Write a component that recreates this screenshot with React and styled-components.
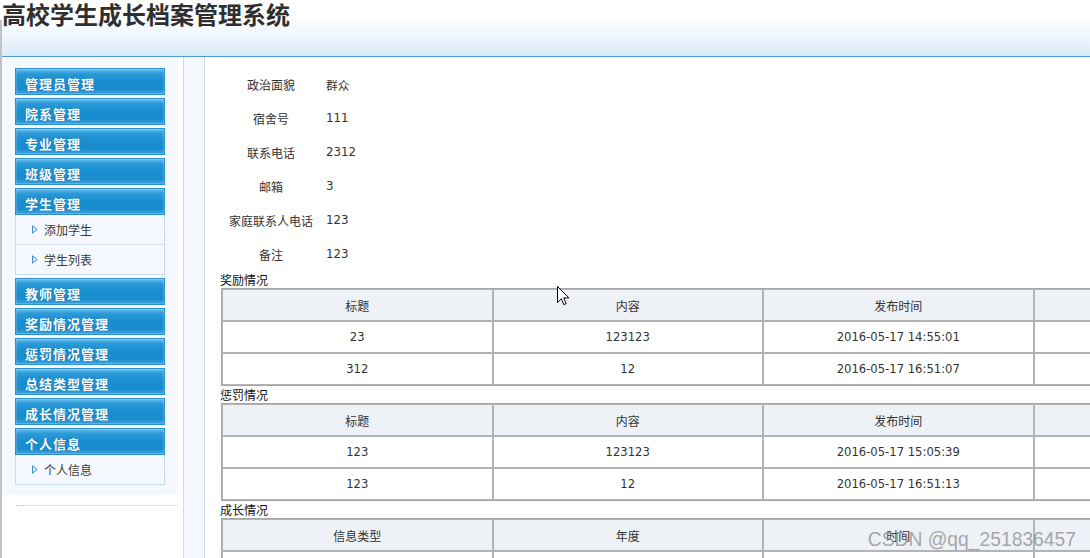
import React from "react";
import styled, { createGlobalStyle } from "styled-components";

const GlobalStyle = createGlobalStyle`
  html, body {
    margin: 0;
    padding: 0;
    background: #ffffff;
    overflow: hidden;
  }
  body {
    font-family: "DejaVu Sans", "Noto Sans CJK SC", sans-serif;
    font-size: 12px;
    color: #333;
  }
  * { box-sizing: border-box; }
`;

const Page = styled.div`
  position: relative;
  width: 1090px;
  height: 558px;
  overflow: hidden;
`;

const Header = styled.header`
  position: relative;
  height: 57px;
  padding-top: 1px;
  background: linear-gradient(#ffffff 0px, #ffffff 20px, #fbfdff 20px, #eef6fd 36px, #dbebf9 56px);
  border-bottom: 1px solid #4b9bd8;
  &::before {
    content: "";
    position: absolute;
    left: 0;
    top: 20px;
    bottom: -1px;
    width: 2px;
    background: #c2c2c2;
  }
`;

const Title = styled.h1`
  margin: 0;
  padding-left: 2px;
  font-family: "Noto Sans CJK SC", sans-serif;
  font-weight: 700;
  font-size: 24px;
  line-height: 26px;
  color: #2f2f2f;
  white-space: nowrap;
`;

const Body = styled.div`
  display: flex;
  height: 501px;
  border-left: 2px solid #c2c2c2;
`;

const Sidebar = styled.div`
  flex: 0 0 176px;
  display: flex;
  flex-direction: column;
`;

const MenuPanel = styled.div`
  height: 438px;
  background: #f5f9ff;
  padding: 11px 0 0 13px;
`;

const DottedLine = styled.div`
  margin: 10px 0 0 14px;
  border-top: 1px dotted #a9cbe6;
`;

const Group = styled.div`
  width: 150px;
  margin-bottom: 3px;
`;

const GroupHeader = styled.div`
  height: 27px;
  border: 1px solid #2e8fcd;
  background: linear-gradient(#6cbfea 0%, #2b9ad8 18%, #1a8fd0 45%, #198ccd 80%, #3fa4de 100%);
  box-shadow: inset 0 0 0 1px rgba(255, 255, 255, 0.18);
  padding: 6px 0 0 9px;
  font-family: "Noto Sans CJK SC", sans-serif;
  font-weight: 700;
  font-size: 13px;
  line-height: 17px;
  letter-spacing: 1px;
  color: #ffffff;
  text-shadow: 0 0 1px rgba(0, 60, 110, 0.5);
  white-space: nowrap;
`;

const SubMenu = styled.div`
  border: 1px solid #c6dae8;
  border-top: none;
  background: #f5f9ff;
`;

const SubItem = styled.div`
  display: flex;
  align-items: center;
  height: ${(p) => (p.$first ? "29px" : "30px")};
  padding-left: 16px;
  border-top: ${(p) => (p.$first ? "none" : "1px solid #d3e2ee")};
  font-family: "Noto Sans CJK SC", sans-serif;
  font-size: 12px;
  color: #3a3a3a;
`;

const Arrow = styled.svg`
  width: 6px;
  height: 9px;
  margin-right: 6px;
  flex: 0 0 auto;
`;

const Gap = styled.div`
  flex: 0 0 5px;
`;

const Strip = styled.div`
  flex: 0 0 22px;
  background: #f5f9ff;
  border-left: 1px solid #c7ddf2;
  border-right: 1px solid #c7ddf2;
`;

const Content = styled.div`
  flex: 1;
  min-width: 0;
  overflow: hidden;
  padding: 10px 0 0 15px;
`;

const InfoGrid = styled.div`
  display: grid;
  grid-template-columns: 102px auto;
  grid-auto-rows: 34px;
  align-items: center;
`;

const InfoLabel = styled.div`
  text-align: center;
  font-family: "Noto Sans CJK SC", sans-serif;
  font-size: 12px;
  color: #333;
  white-space: nowrap;
`;

const InfoValue = styled.div`
  padding-left: 4px;
  font-family: "DejaVu Sans", "Noto Sans CJK SC", sans-serif;
  font-size: 11.8px;
  color: #333;
`;

const SectionLabel = styled.div`
  height: 17px;
  line-height: 17px;
  font-family: "Noto Sans CJK SC", sans-serif;
  font-size: 12px;
  color: #111;
`;

const Table = styled.table`
  width: 1084px;
  table-layout: fixed;
  border-collapse: separate;
  border-spacing: 0;
  border: 1px solid #a7a7a7;
  margin-left: 1px;
`;

const Th = styled.th`
  height: 32px;
  border: 1px solid #b3b3b3;
  background: #eef1f6;
  font-family: "Noto Sans CJK SC", sans-serif;
  font-weight: 400;
  font-size: 12px;
  color: #333;
  text-align: center;
  padding: 0;
`;

const Td = styled.td`
  height: 32px;
  border: 1px solid #b3b3b3;
  background: #fff;
  font-family: "DejaVu Sans", "Noto Sans CJK SC", sans-serif;
  font-size: 11.6px;
  color: #333;
  text-align: center;
  padding: 0;
`;

const Watermark = styled.div`
  position: absolute;
  right: 14px;
  bottom: 7px;
  font-family: "Liberation Sans", Arial, sans-serif;
  font-size: 19.3px;
  color: rgba(140, 140, 140, 0.75);
  white-space: nowrap;
  pointer-events: none;
`;

const Cursor = styled.svg`
  position: absolute;
  left: 557px;
  top: 286px;
  width: 13px;
  height: 20px;
`;

const menu = [
  { title: "管理员管理" },
  { title: "院系管理" },
  { title: "专业管理" },
  { title: "班级管理" },
  { title: "学生管理", items: ["添加学生", "学生列表"] },
  { title: "教师管理" },
  { title: "奖励情况管理" },
  { title: "惩罚情况管理" },
  { title: "总结类型管理" },
  { title: "成长情况管理" },
  { title: "个人信息", items: ["个人信息"] },
];

const info = [
  ["政治面貌", "群众"],
  ["宿舍号", "111"],
  ["联系电话", "2312"],
  ["邮箱", "3"],
  ["家庭联系人电话", "123"],
  ["备注", "123"],
];

const sections = [
  {
    label: "奖励情况",
    head: ["标题", "内容", "发布时间", ""],
    rows: [
      ["23", "123123", "2016-05-17 14:55:01", ""],
      ["312", "12", "2016-05-17 16:51:07", ""],
    ],
  },
  {
    label: "惩罚情况",
    head: ["标题", "内容", "发布时间", ""],
    rows: [
      ["123", "123123", "2016-05-17 15:05:39", ""],
      ["123", "12", "2016-05-17 16:51:13", ""],
    ],
  },
  {
    label: "成长情况",
    head: ["信息类型", "年度", "时间", ""],
    rows: [["", "", "", ""]],
  },
];

function TriangleIcon() {
  return (
    <Arrow viewBox="0 0 6 9">
      <path d="M0.5 0.8 L5.2 4.5 L0.5 8.2 Z" fill="#dff0fb" stroke="#3a8fd0" strokeWidth="1" />
    </Arrow>
  );
}

export default function App() {
  return (
    <Page>
      <GlobalStyle />
      <Header>
        <Title>高校学生成长档案管理系统</Title>
      </Header>
      <Body>
        <Sidebar>
          <MenuPanel>
            {menu.map((g, gi) => (
              <Group key={gi}>
                <GroupHeader>{g.title}</GroupHeader>
                {g.items && (
                  <SubMenu>
                    {g.items.map((it, i) => (
                      <SubItem key={it} $first={i === 0}>
                        <TriangleIcon />
                        {it}
                      </SubItem>
                    ))}
                  </SubMenu>
                )}
              </Group>
            ))}
          </MenuPanel>
          <DottedLine />
        </Sidebar>
        <Gap />
        <Strip />
        <Content>
          <InfoGrid>
            {info.map(([k, v]) => (
              <React.Fragment key={k}>
                <InfoLabel>{k}</InfoLabel>
                <InfoValue>{v}</InfoValue>
              </React.Fragment>
            ))}
          </InfoGrid>
          {sections.map((s) => (
            <React.Fragment key={s.label}>
              <SectionLabel>{s.label}</SectionLabel>
              <Table>
                <thead>
                  <tr>
                    {s.head.map((h, i) => (
                      <Th key={i}>{h}</Th>
                    ))}
                  </tr>
                </thead>
                <tbody>
                  {s.rows.map((r, ri) => (
                    <tr key={ri}>
                      {r.map((c, ci) => (
                        <Td key={ci}>{c}</Td>
                      ))}
                    </tr>
                  ))}
                </tbody>
              </Table>
            </React.Fragment>
          ))}
        </Content>
      </Body>
      <Cursor viewBox="0 0 13 20">
        <path
          d="M0.5 0.5 L0.5 16.5 L4.3 12.8 L6.8 18.6 L9.2 17.6 L6.7 11.9 L12 11.9 Z"
          fill="#ffffff"
          stroke="#000000"
          strokeWidth="1"
          strokeLinejoin="miter"
        />
      </Cursor>
      <Watermark>CSDN @qq_251836457</Watermark>
    </Page>
  );
}
